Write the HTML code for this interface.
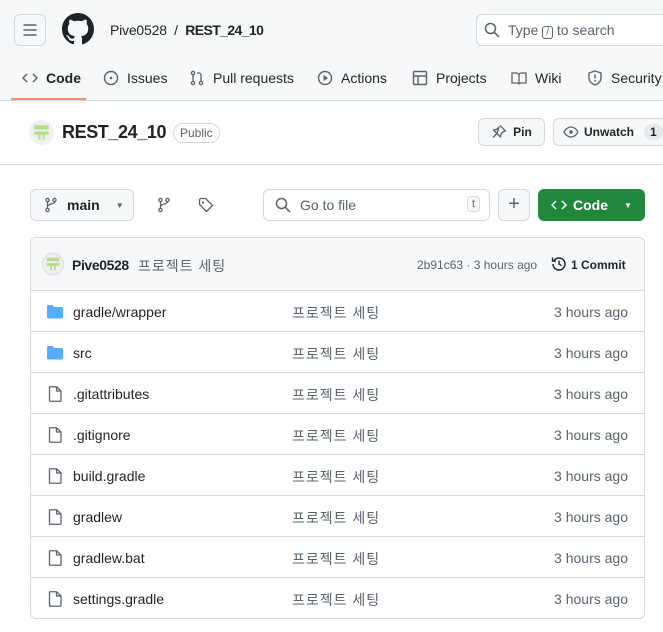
<!DOCTYPE html>
<html><head><meta charset="utf-8"><style>
*{box-sizing:border-box;margin:0;padding:0}
body{width:663px;height:632px;overflow:hidden;background:#fff;font-family:"Liberation Sans","Noto Sans CJK KR",sans-serif;color:#1f2328;font-size:14px;position:relative}
.a{position:absolute}
.hdr{left:0;top:0;width:663px;height:101px;background:#f6f8fa;border-bottom:1px solid #d1d9e0}
.btn{position:absolute;border:1px solid #d1d9e0;border-radius:6px;background:#f6f8fa}
.tab{position:absolute;top:70px;font-size:14px;display:flex;align-items:center;gap:8px;color:#1f2328}
svg{display:block}
.ko{letter-spacing:1px}
.row{position:absolute;left:31px;width:613px;height:41px;border-top:1px solid #d1d9e0}
.row .n{position:absolute;left:42px;top:13px}
.row .m{position:absolute;left:261px;top:12px;color:#59636e;letter-spacing:1px}
.row .t{position:absolute;right:16px;top:13px;color:#59636e}
.row .ic{position:absolute;left:16px;top:13px}
</style></head><body>
<div class="a hdr"></div>
<div class="btn" style="left:14px;top:14px;width:32px;height:32px"><svg width="30" height="30" viewBox="0 0 30 30"><path d="M9 10h12M9 15h12M9 20h12" stroke="#59636e" stroke-width="1.5" stroke-linecap="round"/></svg></div>
<svg class="a" style="left:62px;top:13px" width="32" height="32" viewBox="0 0 16 16"><path fill="#1f2328" d="M8 0C3.580 0 0 3.58 0 8c0 3.54 2.29 6.53 5.47 7.59.4.07.55-.17.55-.38v-1.33c-2.230.48-2.7-1.07-2.7-1.07-.36-.92-.89-1.17-.89-1.17-.73-.5.05-.49.05-.49.8.06 1.23.83 1.23.83.71 1.22 1.87.87 2.33.66.07-.52.28-.87.5-1.07-1.78-.2-3.64-.89-3.64-3.950 0-.87.31-1.59.82-2.15-.08-.2-.36-1.02.08-2.12 0 0 .67-.21 2.2.82.64-.18 1.32-.27 2-.27.68 0 1.36.09 2 .27 1.53-1.04 2.2-.82 2.2-.82.44 1.1.16 1.92.08 2.12.51.56.82 1.27.82 2.15 0 3.07-1.87 3.75-3.65 3.95.29.25.54.73.54 1.48v2.2c0 .21.15.46.55.38A8.013 8.013 0 0016 8c0-4.42-3.58-8-8-8z"/></svg>
<div class="a" style="left:110px;top:22px;font-size:14px;letter-spacing:-0.2px">Pive0528 &nbsp;/ &nbsp;<b style="font-weight:600;letter-spacing:-0.6px">REST_24_10</b></div>
<div class="btn" style="left:476px;top:14px;width:200px;height:32px;background:#fff"></div>
<svg class="a" style="left:484px;top:22px" width="16" height="16" viewBox="0 0 16 16"><circle cx="6.5" cy="6.5" r="5" fill="none" stroke="#59636e" stroke-width="1.5"/><path d="M10.3 10.3L15 15" stroke="#59636e" stroke-width="1.5"/></svg>
<div class="a" style="left:508px;top:22px;color:#59636e">Type <span style="border:1px solid #59636e;border-radius:3px;font-size:10px;padding:0 3px">/</span> to search</div>
<div class="tab" style="left:22px"><svg width="16" height="16" viewBox="0 0 16 16"><path d="M5 4L1 8l4 4M11 4l4 4-4 4" fill="none" stroke="#59636e" stroke-width="1.5"/></svg><b style="font-weight:600">Code</b></div>
<div class="a" style="left:11px;top:98px;width:75px;height:2px;background:#fd8c73"></div>
<div class="tab" style="left:103px"><svg width="16" height="16" viewBox="0 0 16 16"><circle cx="8" cy="8" r="6.5" fill="none" stroke="#59636e" stroke-width="1.4"/><circle cx="8" cy="8" r="1.3" fill="#59636e"/></svg>Issues</div>
<div class="tab" style="left:189px"><svg width="16" height="16" viewBox="0 0 16 16"><circle cx="4" cy="3" r="1.6" fill="none" stroke="#59636e" stroke-width="1.3"/><circle cx="4" cy="13" r="1.6" fill="none" stroke="#59636e" stroke-width="1.3"/><circle cx="12" cy="13" r="1.6" fill="none" stroke="#59636e" stroke-width="1.3"/><path d="M4 4.6v6.8M12 11.4V5a2 2 0 00-2-2H8" fill="none" stroke="#59636e" stroke-width="1.3"/></svg>Pull requests</div>
<div class="tab" style="left:317px"><svg width="16" height="16" viewBox="0 0 16 16"><circle cx="8" cy="8" r="6.5" fill="none" stroke="#59636e" stroke-width="1.4"/><path d="M6.5 5v6l4.5-3z" fill="#59636e"/></svg>Actions</div>
<div class="tab" style="left:412px"><svg width="16" height="16" viewBox="0 0 16 16"><rect x="1.5" y="1.5" width="13" height="13" rx="1" fill="none" stroke="#59636e" stroke-width="1.4"/><path d="M1.5 6h13M6 6v8.5" stroke="#59636e" stroke-width="1.4"/></svg>Projects</div>
<div class="tab" style="left:511px"><svg width="16" height="16" viewBox="0 0 16 16"><path d="M1 3h4a3 3 0 013 2 3 3 0 013-2h4v10h-4a3 3 0 00-3 1 3 3 0 00-3-1H1zM8 5v9" fill="none" stroke="#59636e" stroke-width="1.3"/></svg>Wiki</div>
<div class="tab" style="left:587px"><svg width="16" height="16" viewBox="0 0 16 16"><path d="M8 1l6 2v5c0 3.5-3 6-6 7-3-1-6-3.5-6-7V3z" fill="none" stroke="#59636e" stroke-width="1.4"/><path d="M8 4.5v4" stroke="#59636e" stroke-width="1.5"/><circle cx="8" cy="10.8" r=".9" fill="#59636e"/></svg>Security</div>

<svg class="a" style="left:29px;top:120px" width="25" height="25" viewBox="0 0 24 24"><circle cx="12" cy="12" r="12" fill="#f0f0f0"/><path d="M5 5h14v4H5zM5 11h14v3h-4v5h-2v-5h-2v5H9v-5H5z" fill="#b8dc8e"/></svg>
<div class="a" style="left:62px;top:122px;font-size:18px;font-weight:600;letter-spacing:-0.4px">REST_24_10</div>
<div class="a" style="left:173px;top:123px;border:1px solid #d1d9e0;border-radius:10px;font-size:12px;color:#59636e;padding:2px 6px;font-weight:500">Public</div>
<div class="btn" style="left:478px;top:118px;width:67px;height:28px;display:flex;align-items:center;justify-content:center;gap:6px;font-size:12px;font-weight:600"><svg width="16" height="16" viewBox="0 0 16 16"><path d="M9 1.5l5.5 5.5-2 .5-2.5 2.5-.5 3L6 9.5 2 13.5M6 9.5L2.5 6l3-.5L8 3z" fill="none" stroke="#59636e" stroke-width="1.3" stroke-linejoin="round"/></svg>Pin</div>
<div class="btn" style="left:553px;top:118px;width:120px;height:28px;display:flex;align-items:center;gap:5px;padding-left:9px;font-size:12px;font-weight:600"><svg width="16" height="16" viewBox="0 0 16 16"><path d="M1 8s2.5-5 7-5 7 5 7 5-2.5 5-7 5-7-5-7-5z" fill="none" stroke="#59636e" stroke-width="1.3"/><circle cx="8" cy="8" r="1.8" fill="#59636e"/></svg>Unwatch<span style="background:#e6eaef;border-radius:10px;padding:1px 6px;margin-left:5px">1</span></div>
<div class="a" style="left:0;top:164px;width:663px;height:1px;background:#d1d9e0"></div>

<div class="btn" style="left:30px;top:189px;width:104px;height:32px;display:flex;align-items:center;padding-left:12px;gap:8px;font-weight:600"><svg width="16" height="16" viewBox="0 0 16 16"><circle cx="4.5" cy="3" r="1.6" fill="none" stroke="#59636e" stroke-width="1.3"/><circle cx="4.5" cy="13" r="1.6" fill="none" stroke="#59636e" stroke-width="1.3"/><circle cx="11.5" cy="3" r="1.6" fill="none" stroke="#59636e" stroke-width="1.3"/><path d="M4.5 4.6v6.8M11.5 4.6c0 3-7 2-7 5" fill="none" stroke="#59636e" stroke-width="1.3"/></svg>main<span style="font-size:8px;color:#59636e;margin-left:8px">▼</span></div>
<svg class="a" style="left:156px;top:197px" width="16" height="16" viewBox="0 0 16 16"><circle cx="4.5" cy="3" r="1.6" fill="none" stroke="#59636e" stroke-width="1.3"/><circle cx="4.5" cy="13" r="1.6" fill="none" stroke="#59636e" stroke-width="1.3"/><circle cx="11.5" cy="3" r="1.6" fill="none" stroke="#59636e" stroke-width="1.3"/><path d="M4.5 4.6v6.8M11.5 4.6c0 3-7 2-7 5" fill="none" stroke="#59636e" stroke-width="1.3"/></svg>
<svg class="a" style="left:198px;top:197px" width="16" height="16" viewBox="0 0 16 16"><path d="M1.5 2.5v5l7 7 6-6-7-7h-5z" fill="none" stroke="#59636e" stroke-width="1.3" stroke-linejoin="round"/><circle cx="5" cy="5.5" r="1.1" fill="#59636e"/></svg>
<div class="btn" style="left:263px;top:189px;width:227px;height:32px;background:#fff"></div>
<svg class="a" style="left:275px;top:197px" width="16" height="16" viewBox="0 0 16 16"><circle cx="6.5" cy="6.5" r="5" fill="none" stroke="#59636e" stroke-width="1.5"/><path d="M10.3 10.3L15 15" stroke="#59636e" stroke-width="1.5"/></svg>
<div class="a" style="left:300px;top:197px;color:#59636e">Go to file</div>
<div class="a" style="left:467px;top:196px;border:1px solid #d1d9e0;border-radius:4px;font-size:11px;padding:1px 4px;color:#59636e;background:#f6f8fa">t</div>
<div class="btn" style="left:498px;top:189px;width:32px;height:32px;text-align:center;line-height:28px;font-size:20px;color:#59636e">+</div>
<div class="a" style="left:538px;top:189px;width:107px;height:32px;background:#1f883d;border-radius:6px;color:#fff;display:flex;align-items:center;padding-left:13px;gap:6px;font-weight:600"><svg width="16" height="16" viewBox="0 0 16 16"><path d="M5 4L1 8l4 4M11 4l4 4-4 4" fill="none" stroke="#fff" stroke-width="1.5"/></svg>Code<span style="font-size:8px;margin-left:10px">▼</span></div>

<div class="a" style="left:30px;top:237px;width:615px;height:382px;border:1px solid #d1d9e0;border-radius:6px"></div>
<div class="a" style="left:31px;top:238px;width:613px;height:52px;background:#f6f8fa;border-radius:6px 6px 0 0"></div>
<svg class="a" style="left:42px;top:253px" width="22" height="22" viewBox="0 0 24 24"><circle cx="12" cy="12" r="11.5" fill="#f0f0f0" stroke="#d1d9e0"/><path d="M5 5h14v4H5zM5 11h14v3h-4v5h-2v-5h-2v5H9v-5H5z" fill="#b8dc8e"/></svg>
<div class="a" style="left:72px;top:257px;font-weight:600;letter-spacing:-0.4px">Pive0528</div>
<div class="a ko" style="left:138px;top:256px;color:#59636e">프로젝트 세팅</div>
<div class="a" style="left:417px;top:258px;font-size:12px;color:#59636e">2b91c63 · 3 hours ago</div>
<svg class="a" style="left:551px;top:256px" width="16" height="16" viewBox="0 0 16 16"><path d="M2 8a6 6 0 106-6 6 6 0 00-5 2.6" fill="none" stroke="#1f2328" stroke-width="1.4"/><path d="M1.5 1.5v3.5H5" fill="none" stroke="#1f2328" stroke-width="1.4"/><path d="M8 4.5V8l2.5 1.5" fill="none" stroke="#1f2328" stroke-width="1.4"/></svg>
<div class="a" style="left:571px;top:258px;font-size:12px;font-weight:600">1 Commit</div>

<div class="row" style="top:290px"><svg class="ic" width="16" height="16" viewBox="0 0 16 16"><path d="M0 2.5C0 1.7.7 1 1.5 1h4l1.5 2h7.5c.8 0 1.5.7 1.5 1.5v8.5c0 .8-.7 1.5-1.5 1.5h-13C.7 14.5 0 13.8 0 13z" fill="#54aeff"/></svg><span class="n">gradle/wrapper</span><span class="m">프로젝트 세팅</span><span class="t">3 hours ago</span></div>
<div class="row" style="top:331px"><svg class="ic" width="16" height="16" viewBox="0 0 16 16"><path d="M0 2.5C0 1.7.7 1 1.5 1h4l1.5 2h7.5c.8 0 1.5.7 1.5 1.5v8.5c0 .8-.7 1.5-1.5 1.5h-13C.7 14.5 0 13.8 0 13z" fill="#54aeff"/></svg><span class="n">src</span><span class="m">프로젝트 세팅</span><span class="t">3 hours ago</span></div>
<div class="row" style="top:372px"><svg class="ic" width="16" height="16" viewBox="0 0 16 16"><path d="M3 .75h6.5L14 5v9.5c0 .4-.3.75-.75.75h-10c-.4 0-.75-.35-.75-.75V1.5c0-.4.3-.75.5-.75zM9.5.75V5H14" fill="none" stroke="#59636e" stroke-width="1.3" stroke-linejoin="round"/></svg><span class="n">.gitattributes</span><span class="m">프로젝트 세팅</span><span class="t">3 hours ago</span></div>
<div class="row" style="top:413px"><svg class="ic" width="16" height="16" viewBox="0 0 16 16"><path d="M3 .75h6.5L14 5v9.5c0 .4-.3.75-.75.75h-10c-.4 0-.75-.35-.75-.75V1.5c0-.4.3-.75.5-.75zM9.5.75V5H14" fill="none" stroke="#59636e" stroke-width="1.3" stroke-linejoin="round"/></svg><span class="n">.gitignore</span><span class="m">프로젝트 세팅</span><span class="t">3 hours ago</span></div>
<div class="row" style="top:454px"><svg class="ic" width="16" height="16" viewBox="0 0 16 16"><path d="M3 .75h6.5L14 5v9.5c0 .4-.3.75-.75.75h-10c-.4 0-.75-.35-.75-.75V1.5c0-.4.3-.75.5-.75zM9.5.75V5H14" fill="none" stroke="#59636e" stroke-width="1.3" stroke-linejoin="round"/></svg><span class="n">build.gradle</span><span class="m">프로젝트 세팅</span><span class="t">3 hours ago</span></div>
<div class="row" style="top:495px"><svg class="ic" width="16" height="16" viewBox="0 0 16 16"><path d="M3 .75h6.5L14 5v9.5c0 .4-.3.75-.75.75h-10c-.4 0-.75-.35-.75-.75V1.5c0-.4.3-.75.5-.75zM9.5.75V5H14" fill="none" stroke="#59636e" stroke-width="1.3" stroke-linejoin="round"/></svg><span class="n">gradlew</span><span class="m">프로젝트 세팅</span><span class="t">3 hours ago</span></div>
<div class="row" style="top:536px"><svg class="ic" width="16" height="16" viewBox="0 0 16 16"><path d="M3 .75h6.5L14 5v9.5c0 .4-.3.75-.75.75h-10c-.4 0-.75-.35-.75-.75V1.5c0-.4.3-.75.5-.75zM9.5.75V5H14" fill="none" stroke="#59636e" stroke-width="1.3" stroke-linejoin="round"/></svg><span class="n">gradlew.bat</span><span class="m">프로젝트 세팅</span><span class="t">3 hours ago</span></div>
<div class="row" style="top:577px"><svg class="ic" width="16" height="16" viewBox="0 0 16 16"><path d="M3 .75h6.5L14 5v9.5c0 .4-.3.75-.75.75h-10c-.4 0-.75-.35-.75-.75V1.5c0-.4.3-.75.5-.75zM9.5.75V5H14" fill="none" stroke="#59636e" stroke-width="1.3" stroke-linejoin="round"/></svg><span class="n">settings.gradle</span><span class="m">프로젝트 세팅</span><span class="t">3 hours ago</span></div>
</body></html>
